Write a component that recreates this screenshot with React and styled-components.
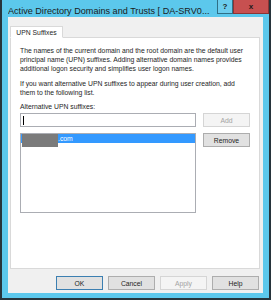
import React from "react";
import styled, { createGlobalStyle } from "styled-components";

const Global = createGlobalStyle`
  html, body { margin: 0; padding: 0; background: #ffffff; }
  body { font-family: "Liberation Sans", Arial, sans-serif; }
`;

const Frame = styled.div`
  width: 271px;
  height: 300px;
  box-sizing: border-box;
  border: 2px solid #27343b;
  border-top: none;
  background: #5cc8ec;
  display: flex;
  flex-direction: column;
`;

const TitleBar = styled.div`
  height: 17px;
  display: flex;
  align-items: flex-start;
  padding-left: 6px;
`;

const Title = styled.div`
  flex: 1;
  font-size: 9.1px;
  line-height: 22px;
  height: 17px;
  color: #1b1b1b;
  white-space: nowrap;
  overflow: hidden;
`;

const CaptionButton = styled.div`
  width: ${(p) => p.$w}px;
  height: 14px;
  box-sizing: border-box;
  display: flex;
  align-items: center;
  justify-content: center;
  background: ${(p) => p.$bg};
  border: 1px solid ${(p) => p.$border};
  border-top: none;
  font-size: 8px;
  font-weight: bold;
  color: #1a1a1a;
`;

const Body = styled.div`
  flex: 1;
  display: flex;
  padding: 0 6px 6px 6px;
`;

const Client = styled.div`
  flex: 1;
  background: #f0f0f0;
  display: flex;
  flex-direction: column;
  padding: 9px 3px 3px 2px;
`;

const TabStrip = styled.div`
  display: flex;
  height: 11px;
`;

const Tab = styled.div`
  width: 53px;
  box-sizing: border-box;
  background: #ffffff;
  border: 1px solid #d9d9d9;
  border-bottom: 1px solid #ffffff;
  margin-bottom: -1px;
  position: relative;
  z-index: 1;
  font-size: 6.8px;
  line-height: 11px;
  color: #1e1e1e;
  text-align: center;
  height: 12px;
`;

const Panel = styled.div`
  height: 232px;
  box-sizing: border-box;
  background: #ffffff;
  border: 1px solid #d9d9d9;
  padding: 8px 9px 0 9px;
  display: flex;
  flex-direction: column;
`;

const Para = styled.div`
  font-size: 6.8px;
  line-height: 9px;
  color: #1e1e1e;
  white-space: nowrap;
  margin-bottom: ${(p) => p.$mb || 0}px;
`;

const Label = styled.div`
  font-size: 6.8px;
  line-height: 9px;
  color: #1e1e1e;
  margin-bottom: 2px;
`;

const Row = styled.div`
  display: flex;
  align-items: flex-start;
  gap: 7px;
  margin-top: ${(p) => p.$mt || 0}px;
`;

const Input = styled.div`
  width: 176px;
  height: 14px;
  box-sizing: border-box;
  border: 1px solid #abadb3;
  background: #fff;
  display: flex;
  align-items: center;
  padding-left: 2px;
`;

const Caret = styled.span`
  width: 1px;
  height: 9px;
  background: #000;
`;

const List = styled.div`
  width: 176px;
  height: 80px;
  box-sizing: border-box;
  border: 1px solid #abadb3;
  background: #fff;
`;

const ListItem = styled.div`
  height: 9px;
  background: #3399ff;
  color: #ffffff;
  font-size: 6.8px;
  line-height: 9px;
  display: flex;
  align-items: flex-start;
  padding-left: 1px;
  overflow: visible;
`;

const Redact = styled.span`
  display: inline-block;
  width: 36px;
  height: 13px;
  background: #7b7b7b;
  flex: none;
`;

const Button = styled.div`
  width: 47px;
  height: 14px;
  box-sizing: border-box;
  border: 1px solid ${(p) => (p.$disabled ? "#d5d5d5" : p.$default ? "#3c7fb1" : "#adadad")};
  background: ${(p) => (p.$disabled ? "#f4f4f4" : "#e1e1e1")};
  color: ${(p) => (p.$disabled ? "#a3a3a3" : "#1e1e1e")};
  font-size: 6.8px;
  display: flex;
  align-items: center;
  justify-content: center;
`;

const Footer = styled.div`
  display: flex;
  justify-content: flex-end;
  gap: 5px;
  margin-top: 7px;
  padding-right: 1px;
`;

export default function App() {
  return (
    <>
      <Global />
      <Frame>
        <TitleBar>
          <Title>Active Directory Domains and Trusts [ DA-SRV0...</Title>
          <CaptionButton $w={16} $bg="#6ccdee" $border="#2f6f86">?</CaptionButton>
          <CaptionButton $w={36} $bg="#c75050" $border="#8c3434">x</CaptionButton>
        </TitleBar>
        <Body>
          <Client>
            <TabStrip>
              <Tab>UPN Suffixes</Tab>
            </TabStrip>
            <Panel>
              <Para $mb={6}>
                The names of the current domain and the root domain are the default user
                <br />
                principal name (UPN) suffixes. Adding alternative domain names provides
                <br />
                additional logon security and simplifies user logon names.
              </Para>
              <Para $mb={5}>
                If you want alternative UPN suffixes to appear during user creation, add
                <br />
                them to the following list.
              </Para>
              <Label>Alternative UPN suffixes:</Label>
              <Row>
                <Input>
                  <Caret />
                </Input>
                <Button $disabled>Add</Button>
              </Row>
              <Row $mt={6}>
                <List>
                  <ListItem>
                    <Redact />
                    .com
                  </ListItem>
                </List>
                <Button>Remove</Button>
              </Row>
            </Panel>
            <Footer>
              <Button $default>OK</Button>
              <Button>Cancel</Button>
              <Button $disabled>Apply</Button>
              <Button>Help</Button>
            </Footer>
          </Client>
        </Body>
      </Frame>
    </>
  );
}
